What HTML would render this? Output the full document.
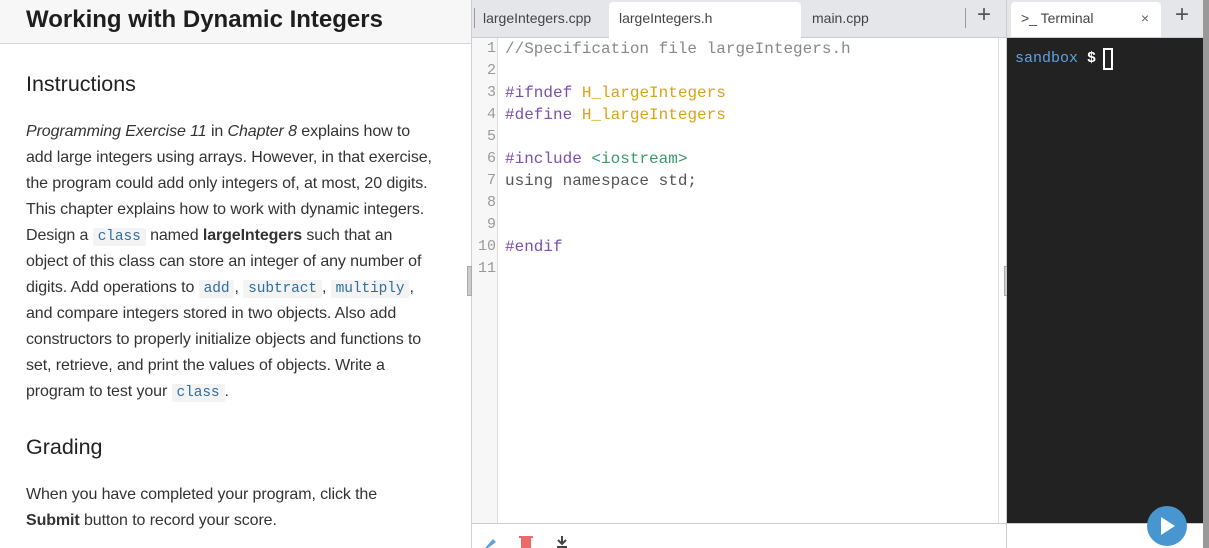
<!DOCTYPE html>
<html><head><style>
*{margin:0;padding:0;box-sizing:border-box}
body{width:1209px;height:548px;overflow:hidden;background:#fff;font-family:"Liberation Sans",sans-serif;position:relative;color:#333}
.a{position:absolute;white-space:nowrap}
.hdr{left:0;top:0;width:471px;height:44px;background:#f7f7f7;border-bottom:1px solid #d6d6d6}
.t{left:26px;font-size:16px;color:#333;line-height:26px;letter-spacing:-0.1px}
code{font-family:"Liberation Mono",monospace;font-size:14.5px;color:#2f6f9f;background:#f3f3f3;padding:1px 5px;border-radius:2px}
.cl{font-family:"Liberation Mono",monospace;font-size:16px;line-height:22px;left:505px;color:#555}
.ln{font-family:"Liberation Mono",monospace;font-size:15px;line-height:22px;width:24px;text-align:right;left:472px;color:#999}
.tab{top:2px;height:35px;font-size:14px;color:#444;padding:8px 10px;border-radius:4px 4px 0 0}
</style></head><body>
<div class="a hdr"></div>
<div class="a" style="left:26px;top:6px;font-size:24px;font-weight:bold;color:#1e1e1e">Working with Dynamic Integers</div>
<div class="a" style="left:26px;top:72px;font-size:21.5px;color:#222">Instructions</div>
<div class="a t" style="top:119px"><i>Programming Exercise 11</i> in <i>Chapter 8</i> explains how to</div>
<div class="a t" style="top:145px">add large integers using arrays. However, in that exercise,</div>
<div class="a t" style="top:171px">the program could add only integers of, at most, 20 digits.</div>
<div class="a t" style="top:197px">This chapter explains how to work with dynamic integers.</div>
<div class="a t" style="top:223px">Design a <code>class</code> named <b>largeIntegers</b> such that an</div>
<div class="a t" style="top:249px">object of this class can store an integer of any number of</div>
<div class="a t" style="top:275px">digits. Add operations to <code>add</code>, <code>subtract</code>, <code>multiply</code>,</div>
<div class="a t" style="top:301px">and compare integers stored in two objects. Also add</div>
<div class="a t" style="top:327px">constructors to properly initialize objects and functions to</div>
<div class="a t" style="top:353px">set, retrieve, and print the values of objects. Write a</div>
<div class="a t" style="top:379px">program to test your <code>class</code>.</div>
<div class="a" style="left:26px;top:435px;font-size:21.5px;color:#222">Grading</div>
<div class="a t" style="top:482px">When you have completed your program, click the</div>
<div class="a t" style="top:508px"><b>Submit</b> button to record your score.</div>

<div class="a" style="left:471px;top:0;width:1px;height:548px;background:#d0d0d0"></div>
<div class="a" style="left:472px;top:0;width:737px;height:38px;background:#e4e6e9;border-bottom:1px solid #ccc"></div>
<div class="a" style="left:474px;top:8px;width:1px;height:20px;background:#999"></div>
<div class="a tab" style="left:473px">largeIntegers.cpp</div>
<div class="a tab" style="left:609px;width:192px;background:#fff;top:2px;height:37px">largeIntegers.h</div>
<div class="a tab" style="left:802px">main.cpp</div>
<div class="a" style="left:965px;top:8px;width:1px;height:20px;background:#999"></div>
<div class="a" style="left:977px;top:1px;font-size:24px;color:#555">+</div>
<div class="a" style="left:1006px;top:0;width:1px;height:548px;background:#ccc"></div>
<div class="a tab" style="left:1011px;width:150px;background:#fff;height:35px">&gt;_ Terminal<span style="position:absolute;right:12px;color:#666">×</span></div>
<div class="a" style="left:1175px;top:1px;font-size:24px;color:#555">+</div>

<div class="a" style="left:472px;top:38px;width:26px;height:485px;background:#f7f7f7;border-right:1px solid #ddd"></div>
<div class="a" style="left:998px;top:38px;width:8px;height:485px;background:#fff;border-left:1px solid #ddd"></div>
<div class="a" style="left:467px;top:266px;width:5px;height:30px;background:#ccc;border:1px solid #aaa"></div>
<div class="a" style="left:1004px;top:266px;width:5px;height:30px;background:#ccc;border:1px solid #aaa"></div>

<div class="a ln" style="top:38px">1</div><div class="a ln" style="top:60px">2</div><div class="a ln" style="top:82px">3</div><div class="a ln" style="top:104px">4</div><div class="a ln" style="top:126px">5</div><div class="a ln" style="top:148px">6</div><div class="a ln" style="top:170px">7</div><div class="a ln" style="top:192px">8</div><div class="a ln" style="top:214px">9</div><div class="a ln" style="top:236px">10</div><div class="a ln" style="top:258px">11</div>
<div class="a cl" style="top:38px;color:#888">//Specification file largeIntegers.h</div>
<div class="a cl" style="top:82px"><span style="color:#7a4fb0">#ifndef</span> <span style="color:#d9a21a">H_largeIntegers</span></div>
<div class="a cl" style="top:104px"><span style="color:#7a4fb0">#define</span> <span style="color:#d9a21a">H_largeIntegers</span></div>
<div class="a cl" style="top:148px"><span style="color:#7a4fb0">#include</span> <span style="color:#3a9a6a">&lt;iostream&gt;</span></div>
<div class="a cl" style="top:170px;color:#555">using namespace std;</div>
<div class="a cl" style="top:236px;color:#7a4fb0">#endif</div>

<div class="a" style="left:1007px;top:38px;width:196px;height:485px;background:#222"></div>
<div class="a" style="left:1203px;top:0;width:6px;height:548px;background:#999"></div>
<div class="a" style="left:1015px;top:50px;font-family:'Liberation Mono',monospace;font-size:15px;color:#5fa0e0">sandbox <span style="color:#fff;font-weight:bold">$</span></div>
<div class="a" style="left:1103px;top:48px;width:10px;height:22px;border:2px solid #fff"></div>

<div class="a" style="left:472px;top:523px;width:731px;height:1px;background:#ccc"></div>
<svg class="a" style="left:482px;top:534px" width="100" height="14">
<path d="M3 14 L11 5 L14 8 L6 14Z" fill="#5aa3dd"/>
<rect x="39" y="4" width="10" height="10" fill="#ec6a6a"/><rect x="37" y="2" width="14" height="2" fill="#ec6a6a"/>
<path d="M80 2 V9 M76 6 L80 10 L84 6 M75 13 H85" stroke="#444" stroke-width="2" fill="none"/>
</svg>
<div class="a" style="left:1147px;top:506px;width:40px;height:40px;border-radius:50%;background:#4896d0"></div>
<svg class="a" style="left:1157px;top:514px" width="22" height="24"><path d="M4 3 L18 12 L4 21Z" fill="#fff"/></svg>
</body></html>
